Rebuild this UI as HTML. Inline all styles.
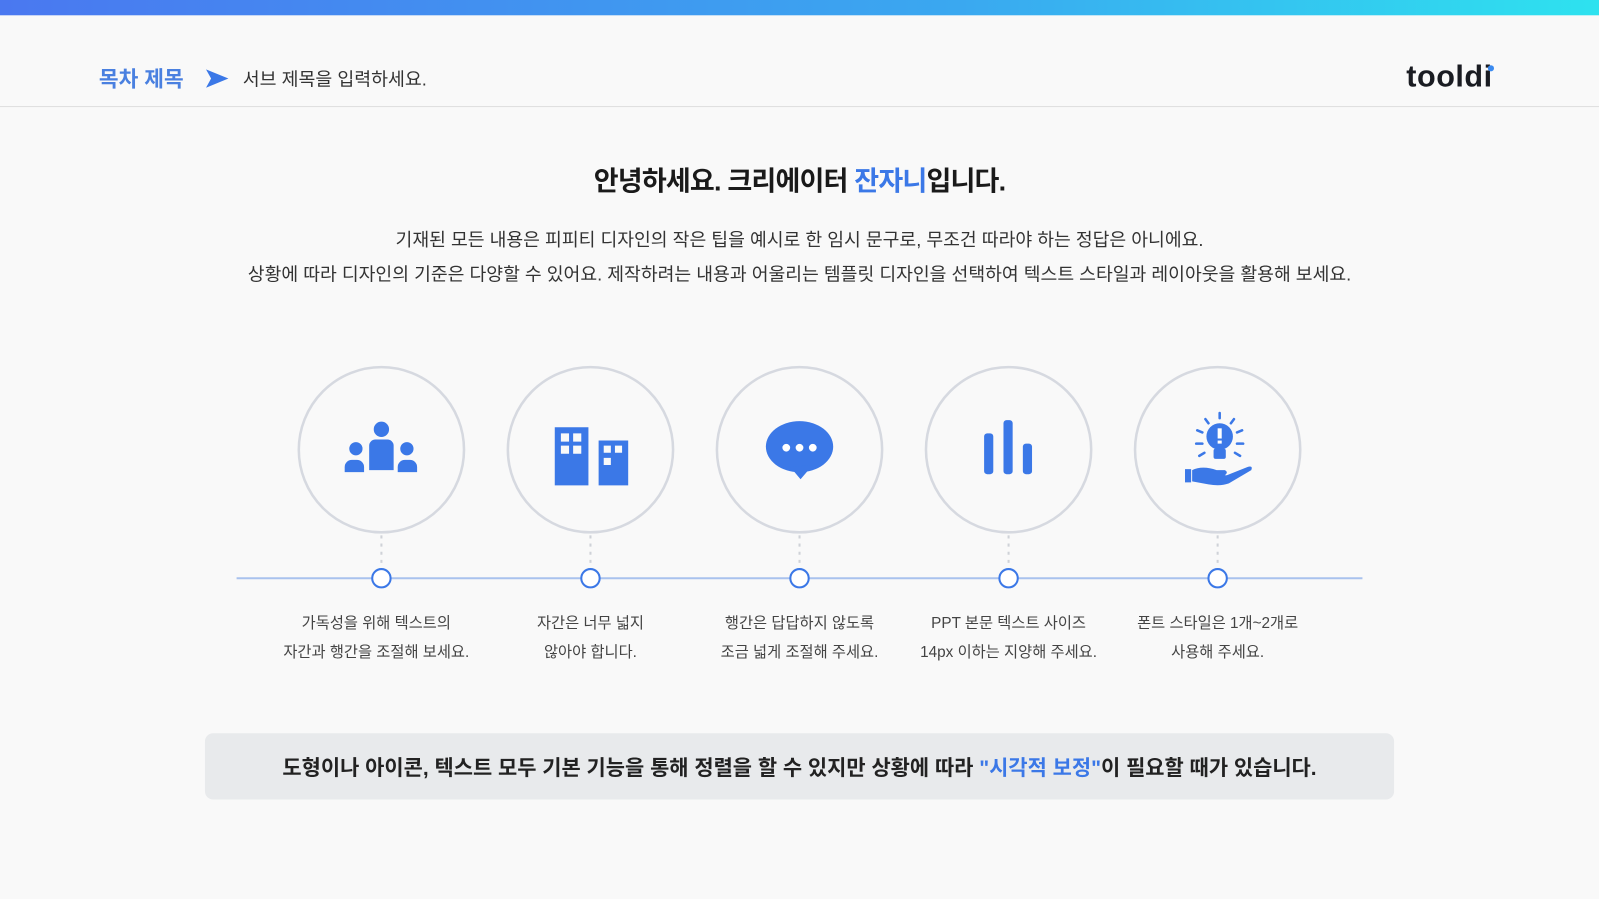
<!DOCTYPE html>
<html><head><meta charset="utf-8"><style>
*{margin:0;padding:0;box-sizing:border-box}
body{width:1599px;height:899px;background:#f9f9f9;position:relative;overflow:hidden;font-family:"Liberation Sans","Noto Sans CJK KR",sans-serif;color:#222}
#w{position:absolute;left:0;top:0;width:1568px;height:882px;transform:scale(1.0198);transform-origin:0 0}
.top{position:absolute;left:0;top:0;width:1568px;height:15px;background:linear-gradient(90deg,#4a78f0,#3aa8f0 60%,#2ee2ef)}
.hline{position:absolute;left:0;top:104px;width:1568px;height:1px;background:#dedede}
.abs{position:absolute;white-space:nowrap}
.c{text-align:center}
.blue{color:#3b78e7}
.cap{position:absolute;width:240px;text-align:center;font-size:15px;line-height:28px;color:#444}
</style></head><body><div id="w">
<div class="top"></div>
<div class="abs blue" style="left:97px;top:62px;font-size:21px;font-weight:700;color:#4a80e0">목차 제목</div>
<svg class="abs" style="left:202px;top:68px" width="22" height="18"><path d="M0 0 L22 9 L0 18 L5 9 Z" fill="#3b78e7"/></svg>
<div class="abs" style="left:238px;top:64px;font-size:18px;color:#333">서브 제목을 입력하세요.</div>
<div class="abs" style="left:1379px;top:59px;font-size:30px;font-weight:700;color:#1a1c22;letter-spacing:0.5px">tooldi</div>
<div class="abs" style="left:1459px;top:64px;width:6px;height:6px;border-radius:50%;background:#3b8af0"></div>
<div class="hline"></div>

<div class="abs c" style="left:0;width:1568px;top:156px;font-size:26.5px;font-weight:700;color:#1a1a1a;letter-spacing:-0.8px">안녕하세요. 크리에이터 <span class="blue">잔자니</span>입니다.</div>
<div class="abs c" style="left:0;width:1568px;top:218px;font-size:17.9px;line-height:34px;color:#333">기재된 모든 내용은 피피티 디자인의 작은 팁을 예시로 한 임시 문구로, 무조건 따라야 하는 정답은 아니에요.<br>상황에 따라 디자인의 기준은 다양할 수 있어요. 제작하려는 내용과 어울리는 템플릿 디자인을 선택하여 텍스트 스타일과 레이아웃을 활용해 보세요.</div>

<svg class="abs" style="left:0;top:0" width="1568" height="882">
<line x1="232" y1="567" x2="1336" y2="567" stroke="#a9c2ee" stroke-width="2"/>
<g fill="#f9f9f9" stroke="#d6d9e0" stroke-width="2.5">
<circle cx="374" cy="441" r="81"/><circle cx="579" cy="441" r="81"/><circle cx="784" cy="441" r="81"/><circle cx="989" cy="441" r="81"/><circle cx="1194" cy="441" r="81"/>
</g>
<g stroke="#cfd2d8" stroke-width="2" stroke-dasharray="3,5">
<line x1="374" y1="525" x2="374" y2="552"/><line x1="579" y1="525" x2="579" y2="552"/><line x1="784" y1="525" x2="784" y2="552"/><line x1="989" y1="525" x2="989" y2="552"/><line x1="1194" y1="525" x2="1194" y2="552"/>
</g>
<g fill="#fff" stroke="#3b78e7" stroke-width="2">
<circle cx="374" cy="567" r="9"/><circle cx="579" cy="567" r="9"/><circle cx="784" cy="567" r="9"/><circle cx="989" cy="567" r="9"/><circle cx="1194" cy="567" r="9"/>
</g>
<g fill="#3b78e7">
<circle cx="374" cy="421" r="7.5"/><path d="M362 461 v-24 a6 6 0 0 1 6 -6 h12 a6 6 0 0 1 6 6 v24 z"/>
<circle cx="349" cy="440" r="6.5"/><path d="M338 463 v-5 a7 7 0 0 1 7 -7 h5 a7 7 0 0 1 7 7 v5 z"/>
<circle cx="399" cy="440" r="6.5"/><path d="M390 463 v-5 a7 7 0 0 1 7 -7 h5 a7 7 0 0 1 7 7 v5 z"/>
<path d="M544 419 h33 v57 h-33 z M550 425 v8 h8 v-8 z M562 425 v8 h8 v-8 z M550 437 v8 h8 v-8 z M562 437 v8 h8 v-8 z" fill-rule="evenodd"/>
<path d="M587 432 h29 v44 h-29 z M592 437 v7 h7 v-7 z M603 437 v7 h7 v-7 z M592 449 v7 h7 v-7 z" fill-rule="evenodd"/>
<ellipse cx="784" cy="438" rx="33" ry="25"/><path d="M775 458 l10 12 l12 -14 z"/>
<rect x="965" y="425" width="9" height="40" rx="3"/><rect x="984" y="412" width="9" height="53" rx="3"/><rect x="1003" y="435" width="9" height="30" rx="3"/>
<circle cx="1196" cy="428" r="13"/><rect x="1190" y="440" width="12" height="10" rx="2"/>
<path d="M1162 460 h6 v13 h-6z M1169 461 q10 -5 24 0 h8 q4 2 0 5 h-14 h16 l20 -8 q6 -2 4 3 l-22 13 q-8 3 -20 1 l-16 -3z"/>
</g>
<g fill="#fff"><circle cx="771" cy="439" r="3.8"/><circle cx="784" cy="439" r="3.8"/><circle cx="797" cy="439" r="3.8"/></g>
<rect x="1194" y="420" width="4" height="10" fill="#fff"/><rect x="1194" y="432" width="4" height="3" fill="#fff"/>
<g stroke="#3b78e7" stroke-width="2.5" stroke-linecap="round">
<line x1="1196" y1="405" x2="1196" y2="410"/><line x1="1182" y1="411" x2="1185" y2="415"/><line x1="1210" y1="411" x2="1207" y2="415"/>
<line x1="1174" y1="422" x2="1179" y2="424"/><line x1="1218" y1="422" x2="1213" y2="424"/>
<line x1="1173" y1="435" x2="1179" y2="435"/><line x1="1219" y1="435" x2="1213" y2="435"/>
<line x1="1176" y1="447" x2="1181" y2="444"/><line x1="1216" y1="447" x2="1211" y2="444"/>
</g>
</svg>

<div class="cap" style="left:249px;top:598px">가독성을 위해 텍스트의<br>자간과 행간을 조절해 보세요.</div>
<div class="cap" style="left:459px;top:598px">자간은 너무 넓지<br>않아야 합니다.</div>
<div class="cap" style="left:664px;top:598px">행간은 답답하지 않도록<br>조금 넓게 조절해 주세요.</div>
<div class="cap" style="left:869px;top:598px">PPT 본문 텍스트 사이즈<br>14px 이하는 지양해 주세요.</div>
<div class="cap" style="left:1074px;top:598px">폰트 스타일은 1개~2개로<br>사용해 주세요.</div>

<div class="abs c" style="left:201px;top:719px;width:1166px;height:65px;border-radius:8px;background:#e8eaec;font-size:20.5px;font-weight:700;line-height:69px;color:#222">도형이나 아이콘, 텍스트 모두 기본 기능을 통해 정렬을 할 수 있지만 상황에 따라 <span class="blue">"시각적 보정"</span>이 필요할 때가 있습니다.</div>
</div></body></html>
